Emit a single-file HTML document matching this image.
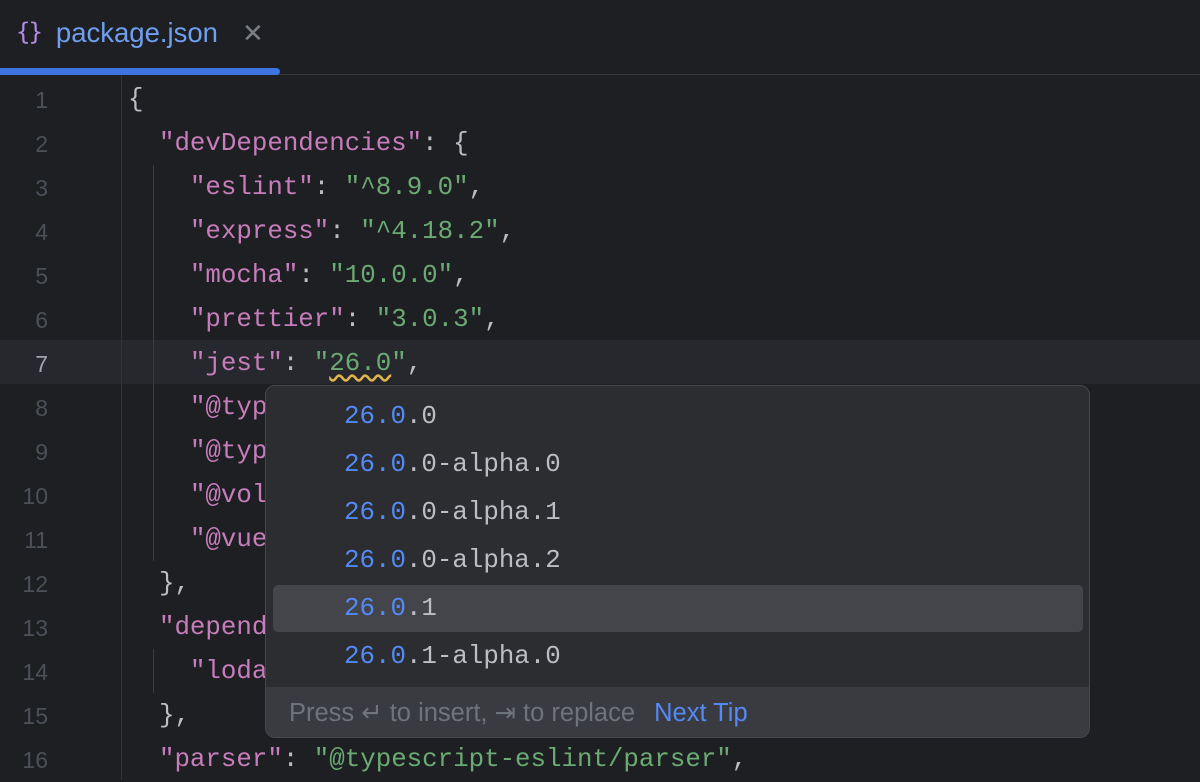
<!DOCTYPE html>
<html><head><style>
body{margin:0;width:1200px;height:780px;background:#1e1f22;overflow:hidden;position:relative;font-family:"Liberation Mono",monospace;}
.tabbar{position:absolute;left:0;top:0;width:1200px;height:75px;border-bottom:1px solid #393b40;box-sizing:border-box;}
.tab{position:absolute;left:16px;top:17px;font-family:"Liberation Sans",sans-serif;font-size:27.5px;color:#6f9ff0;}
.tab .br{color:#b38ae8;margin-right:15px;font-family:"DejaVu Sans Mono",monospace;font-size:24px;letter-spacing:-2px;position:relative;top:-2px}
.tab .x{color:#7a7e85;margin-left:24px;font-size:26px}
.ul{position:absolute;left:0;top:68px;width:280px;height:7px;background:#3d74e0;border-radius:0 4px 4px 0}
.gutline{position:absolute;left:121px;top:75px;width:1px;height:705px;background:#313338}
.cur{position:absolute;left:0;top:340px;width:1200px;height:44px;background:#26282e}
.ln{position:absolute;left:0;width:48px;text-align:right;color:#4b5059;font-size:23px;line-height:44px;font-family:"Liberation Sans",sans-serif}
.code{position:absolute;left:128px;top:78px;white-space:pre;font-size:25.8px;line-height:44px;color:#bcbec4}
.k{color:#c77dbb}.s{color:#6aab73}
.guide{position:absolute;width:1px;background:#393b40}
.pop{position:absolute;left:265px;top:385px;width:825px;height:353px;background:#2b2d30;border:1px solid #45474c;border-radius:10px;box-sizing:border-box;overflow:hidden}
.item{position:absolute;left:78px;font-size:25.8px;line-height:48px;color:#bcbec4;white-space:pre}
.item b{font-weight:normal;color:#548af7}
.sel{position:absolute;left:7px;top:199px;width:810px;height:47px;background:#43454a;border-radius:5px}
.foot{position:absolute;left:0;top:301px;width:825px;height:52px;background:#393b40;font-family:"Liberation Sans",sans-serif;font-size:25.5px;color:#6f737a;line-height:52px;padding-left:23px;box-sizing:border-box}
.foot span{color:#548af7;margin-left:12px}
</style></head><body>
<div class="tabbar"><div class="tab"><span class="br">{}</span>package.json<span class="x">✕</span></div><div class="ul"></div></div>
<div class="cur"></div>
<div class="gutline"></div>
<div class="guide" style="left:153px;top:165px;height:396px"></div>
<div class="guide" style="left:153px;top:649px;height:44px"></div>
<div class="ln" style="top:78px">1</div><div class="ln" style="top:122px">2</div><div class="ln" style="top:166px">3</div><div class="ln" style="top:210px">4</div><div class="ln" style="top:254px">5</div><div class="ln" style="top:298px">6</div><div class="ln" style="top:342px;color:#a1a3ab">7</div><div class="ln" style="top:386px">8</div><div class="ln" style="top:430px">9</div><div class="ln" style="top:474px">10</div><div class="ln" style="top:518px">11</div><div class="ln" style="top:562px">12</div><div class="ln" style="top:606px">13</div><div class="ln" style="top:650px">14</div><div class="ln" style="top:694px">15</div><div class="ln" style="top:738px">16</div>
<div class="code">{
  <span class="k">"devDependencies"</span>: {
    <span class="k">"eslint"</span>: <span class="s">"^8.9.0"</span>,
    <span class="k">"express"</span>: <span class="s">"^4.18.2"</span>,
    <span class="k">"mocha"</span>: <span class="s">"10.0.0"</span>,
    <span class="k">"prettier"</span>: <span class="s">"3.0.3"</span>,
    <span class="k">"jest"</span>: <span class="s">"<span style="text-decoration:underline wavy #e0b64a;text-underline-offset:4px">26.0</span>"</span>,
    <span class="k">"@types/jest"</span>
    <span class="k">"@types/node"</span>
    <span class="k">"@vole/core"</span>
    <span class="k">"@vue/cli"</span>
  },
  <span class="k">"dependencies"</span>: {
    <span class="k">"lodash"</span>
  },
  <span class="k">"parser"</span>: <span class="s">"@typescript-eslint/parser"</span>,
</div>
<div class="pop">
<div class="sel"></div>
<div class="item" style="top:7px"><b>26.0</b>.0</div>
<div class="item" style="top:55px"><b>26.0</b>.0-alpha.0</div>
<div class="item" style="top:103px"><b>26.0</b>.0-alpha.1</div>
<div class="item" style="top:151px"><b>26.0</b>.0-alpha.2</div>
<div class="item" style="top:199px"><b>26.0</b>.1</div>
<div class="item" style="top:247px"><b>26.0</b>.1-alpha.0</div>
<div class="foot">Press ↵ to insert, ⇥ to replace <span>Next Tip</span></div>
</div>
</body></html>
